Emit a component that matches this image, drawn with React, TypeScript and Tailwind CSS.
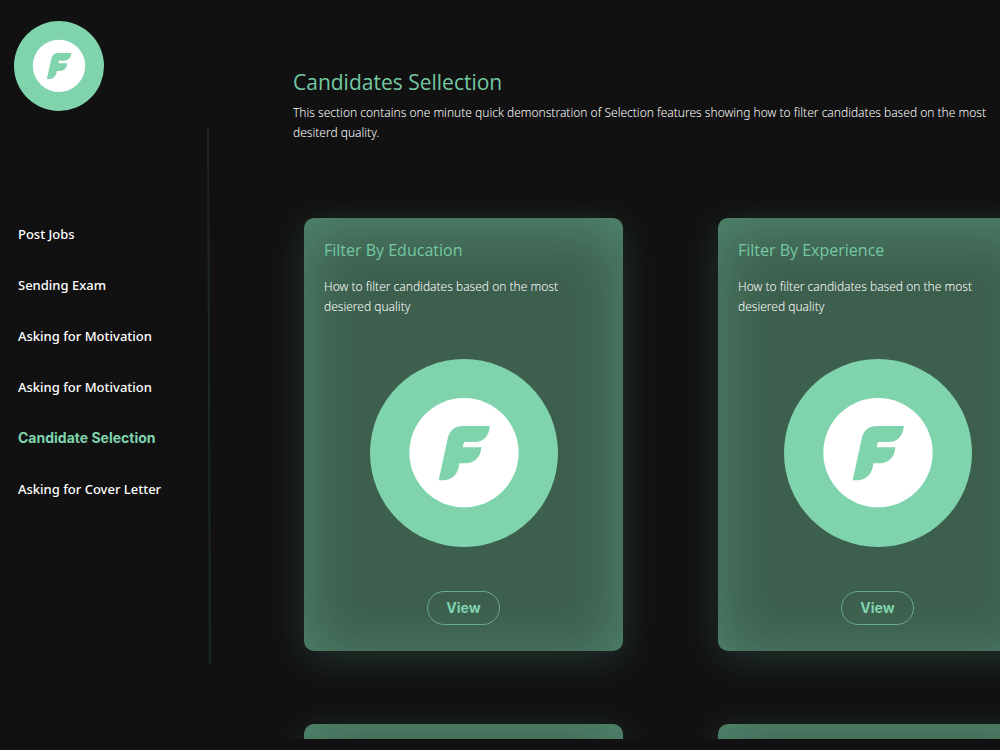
const navItems = [
  { label: "Post Jobs" },
  { label: "Sending Exam" },
  { label: "Asking for Motivation" },
  { label: "Asking for Motivation" },
  { label: "Candidate Selection", active: true },
  { label: "Asking for Cover Letter" },
];

const cards = [
  { title: "Filter By Education", description: "How to filter candidates based on the most desiered quality" },
  { title: "Filter By Experience", description: "How to filter candidates based on the most desiered quality" },
];

const cardSurface =
  "rounded-[10px] bg-[#3d5f4e] shadow-[0_8px_40px_rgba(110,212,174,0.18),inset_0_10px_60px_rgba(120,212,170,0.36)]";

function Logo({ className }: { className: string }) {
  return (
    <svg viewBox="28 26 564 564" className={className} aria-hidden="true">
      <circle cx="310" cy="308" r="282" fill="#7fd4ae" />
      <circle cx="310" cy="307" r="164" fill="#fff" />
      <path
        fill="#7fd4ae"
        d="M234 390L261 265C266 240 282 227 307 227H387C387 253 370 275 343 275H310L306 291H362C361 319 342 339 316 339H296C294 368 276 390 247 390Z"
      />
    </svg>
  );
}

function Sidebar() {
  return (
    <aside className="flex w-[210px] shrink-0 justify-between pt-[21px]">
      <div className="pl-3.5">
        <a href="#" aria-label="Home" className="block w-[90px]">
          <Logo className="size-[90px]" />
        </a>
        <nav className="mt-[113px] flex flex-col gap-[31px] pl-1">
          {navItems.map((item, i) => (
            <a
              key={i}
              href="#"
              className={
                item.active
                  ? "font-['Inter',sans-serif] text-sm leading-5 font-bold whitespace-nowrap text-[#7fd4ae]"
                  : "font-['Noto_Sans',sans-serif] text-[13px] leading-5 font-medium whitespace-nowrap text-white"
              }
            >
              {item.label}
            </a>
          ))}
        </nav>
      </div>
      {/* Divider leans slightly to the right */}
      <div className="mt-[107px] h-[537px] w-0.5 -rotate-[0.2deg] bg-[#1c2725]" />
    </aside>
  );
}

function Card({ title, description }: { title: string; description: string }) {
  return (
    <article className={`flex flex-col items-center px-5 pt-5 pb-[26px] ${cardSurface}`}>
      <h2 className="w-full font-['Open_Sans',sans-serif] text-base leading-6 text-[#74c8a2]">{title}</h2>
      <p className="mt-[15px] w-full font-['Noto_Sans',sans-serif] text-xs leading-5 font-light text-white">
        {description}
      </p>
      <Logo className="mt-[42px] size-[188px]" />
      <button
        type="button"
        className="mt-11 h-[34px] w-[73px] rounded-full border border-[#68a88b] font-['Inter',sans-serif] text-sm font-bold text-[#7fd4ae]"
      >
        View
      </button>
    </article>
  );
}

export default function App() {
  return (
    <div className="h-screen overflow-hidden bg-[#111] pb-[11px]">
      <div className="flex h-full overflow-hidden">
        <Sidebar />
        <main className="min-w-0 flex-1 pt-[66px] pl-[83px]">
          <header>
            <h1 className="font-['Open_Sans',sans-serif] text-[21px] leading-8 text-[#74c8a2]">
              Candidates Sellection
            </h1>
            <p className="mt-[5px] font-['Noto_Sans',sans-serif] text-xs leading-5 font-light text-white">
              This section contains one minute quick demonstration of Selection features showing how to filter candidates
              based on the most desiterd quality.
            </p>
          </header>
          <div className="mt-[75px] ml-[11px] grid grid-cols-[repeat(2,319px)] gap-x-[95px] gap-y-[73px]">
            {cards.map((card) => (
              <Card key={card.title} {...card} />
            ))}
            {/* Next row, still empty */}
            <div className={`h-[433px] ${cardSurface}`} />
            <div className={`h-[433px] ${cardSurface}`} />
          </div>
        </main>
      </div>
    </div>
  );
}
